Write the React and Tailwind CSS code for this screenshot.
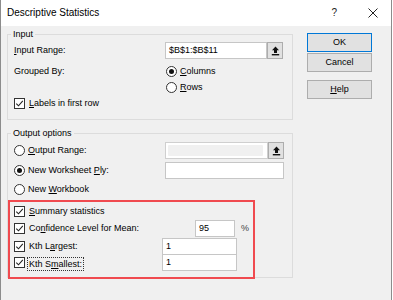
import React from "react";

const Check = () => (
  <span className="w-[11px] h-[11px] shrink-0 border border-[#333333] bg-white flex items-center justify-center">
    <svg width="9" height="9" viewBox="0 0 9 9">
      <polyline points="1.3,4.6 3.5,6.8 7.8,1.8" fill="none" stroke="#222" strokeWidth="1.1" />
    </svg>
  </span>
);

const Radio = ({ on }) => (
  <span className="w-[11px] h-[11px] shrink-0 rounded-full border border-[#333333] bg-white flex items-center justify-center">
    {on && <span className="w-[5px] h-[5px] rounded-full bg-[#111111]" />}
  </span>
);

const UpArrow = () => (
  <svg width="9" height="10" viewBox="0 0 9 10">
    <polygon points="4.5,0.5 8,4.2 6,4.2 6,7 3,7 3,4.2 1,4.2" fill="#111" />
    <rect x="0.8" y="8" width="7.4" height="1.4" fill="#111" />
  </svg>
);

const RangeButton = () => (
  <div className="w-[16px] h-[17px] bg-[#e1e1e1] border border-[#adadad] flex items-center justify-center">
    <UpArrow />
  </div>
);

const TextBox = ({ w, value }) => (
  <div className={`${w} h-[17px] bg-white border border-[#c6c6c6] flex items-center pl-[3px]`}>
    {value}
  </div>
);

const Button = ({ children, primary }) => (
  <div
    className={
      "h-[19px] bg-[#e1e1e1] border flex items-center justify-center " +
      (primary ? "border-[#0078d7]" : "border-[#adadad]")
    }
  >
    {children}
  </div>
);

export default function App() {
  return (
    <div className="w-[393px] h-[300px] bg-white text-[9px] text-black font-['Liberation_Sans',Arial,sans-serif] leading-none">
      <div className="w-[392px] h-[300px] border-x border-[#8c8c8c] bg-[#f0f0f0] flex flex-col overflow-hidden">
        {/* title bar */}
        <div className="h-[26px] shrink-0 bg-white flex items-center pl-[6px] pr-[13px]">
          <span className="text-[10px]">Descriptive Statistics</span>
          <span className="ml-auto mr-[31px] text-[10px] text-[#222]">?</span>
          <svg width="10" height="10" viewBox="0 0 10 10">
            <path d="M0.5 0.5 L9.5 9.5 M9.5 0.5 L0.5 9.5" stroke="#222" strokeWidth="1" />
          </svg>
        </div>

        <div className="flex flex-row">
          <div className="ml-[6px] w-[286px] flex flex-col">
            {/* Input */}
            <fieldset className="mt-[1px] border border-[#dcdcdc] flex flex-col pb-[8px]">
              <legend className="ml-[3px] px-[2px] leading-[14px]">Input</legend>
              <div className="mt-[1px] h-[17px] flex items-center pl-[6px]">
                <span className="w-[151px]">
                  <u>I</u>nput Range:
                </span>
                <TextBox w="w-[102px]" value="$B$1:$B$11" />
                <RangeButton />
              </div>
              <div className="mt-[4px] h-[16px] flex items-center pl-[6px]">
                <span className="w-[152px]">Grouped By:</span>
                <Radio on />
                <span className="ml-[3px]">
                  <u>C</u>olumns
                </span>
              </div>
              <div className="h-[16px] flex items-center pl-[158px]">
                <Radio />
                <span className="ml-[3px]">
                  <u>R</u>ows
                </span>
              </div>
              <div className="h-[16px] flex items-center pl-[6px]">
                <Check />
                <span className="ml-[4px]">
                  <u>L</u>abels in first row
                </span>
              </div>
            </fieldset>

            {/* Output options */}
            <fieldset className="mt-[6px] border border-[#dcdcdc] flex flex-col">
              <legend className="ml-[3px] px-[2px] leading-[14px]">Output options</legend>
              <div className="mt-[2px] h-[17px] flex items-center pl-[6px]">
                <div className="w-[151px] flex items-center">
                  <Radio />
                  <span className="ml-[3px]">
                    <u>O</u>utput Range:
                  </span>
                </div>
                <div className="w-[103px] h-[17px] bg-white border border-[#cfcfcf] pl-[2px] pr-[4px] py-[2px]">
                  <div className="w-full h-full bg-[#f0f0f0] rounded-[1px]" />
                </div>
                <RangeButton />
              </div>
              <div className="mt-[3px] h-[17px] flex items-center pl-[6px]">
                <div className="w-[151px] flex items-center">
                  <Radio on />
                  <span className="ml-[3px]">
                    New Worksheet <u>P</u>ly:
                  </span>
                </div>
                <TextBox w="w-[119px]" value="" />
              </div>
              <div className="mt-[2px] h-[16px] flex items-center pl-[6px]">
                <Radio />
                <span className="ml-[3px]">
                  New <u>W</u>orkbook
                </span>
              </div>

              {/* highlighted block */}
              <div className="mt-[3px] -mb-[2px] w-[247px] border-2 border-[#f04a4f] flex flex-col pb-[6px]">
                <div className="h-[18px] flex items-center pl-[4px]">
                  <Check />
                  <span className="ml-[4px]">
                    <u>S</u>ummary statistics
                  </span>
                </div>
                <div className="h-[17px] flex items-center pl-[4px]">
                  <div className="w-[181px] flex items-center">
                    <Check />
                    <span className="ml-[4px]">
                      Co<u>n</u>fidence Level for Mean:
                    </span>
                  </div>
                  <TextBox w="w-[40px]" value="95" />
                  <span className="ml-[6px] text-[#444]">%</span>
                </div>
                <div className="mt-[1px] h-[17px] flex items-center pl-[4px]">
                  <div className="w-[148px] flex items-center">
                    <Check />
                    <span className="ml-[4px]">
                      Kth L<u>a</u>rgest:
                    </span>
                  </div>
                  <TextBox w="w-[75px]" value="1" />
                </div>
                <div className="-mt-[1px] h-[17px] flex items-center pl-[4px]">
                  <div className="w-[148px] flex items-center">
                    <Check />
                    <span className="ml-[2px] mt-[3px] px-[1px] h-[14px] flex items-center border border-dotted border-[#333]">
                      Kth S<u>m</u>allest:
                    </span>
                  </div>
                  <TextBox w="w-[75px]" value="1" />
                </div>
              </div>
            </fieldset>
          </div>

          {/* buttons */}
          <div className="ml-[14px] mt-[7px] w-[65px] flex flex-col">
            <Button primary>OK</Button>
            <div className="mt-[1px]">
              <Button>Cancel</Button>
            </div>
            <div className="mt-[8px]">
              <Button>
                <span>
                  <u>H</u>elp
                </span>
              </Button>
            </div>
          </div>
        </div>
      </div>
    </div>
  );
}
